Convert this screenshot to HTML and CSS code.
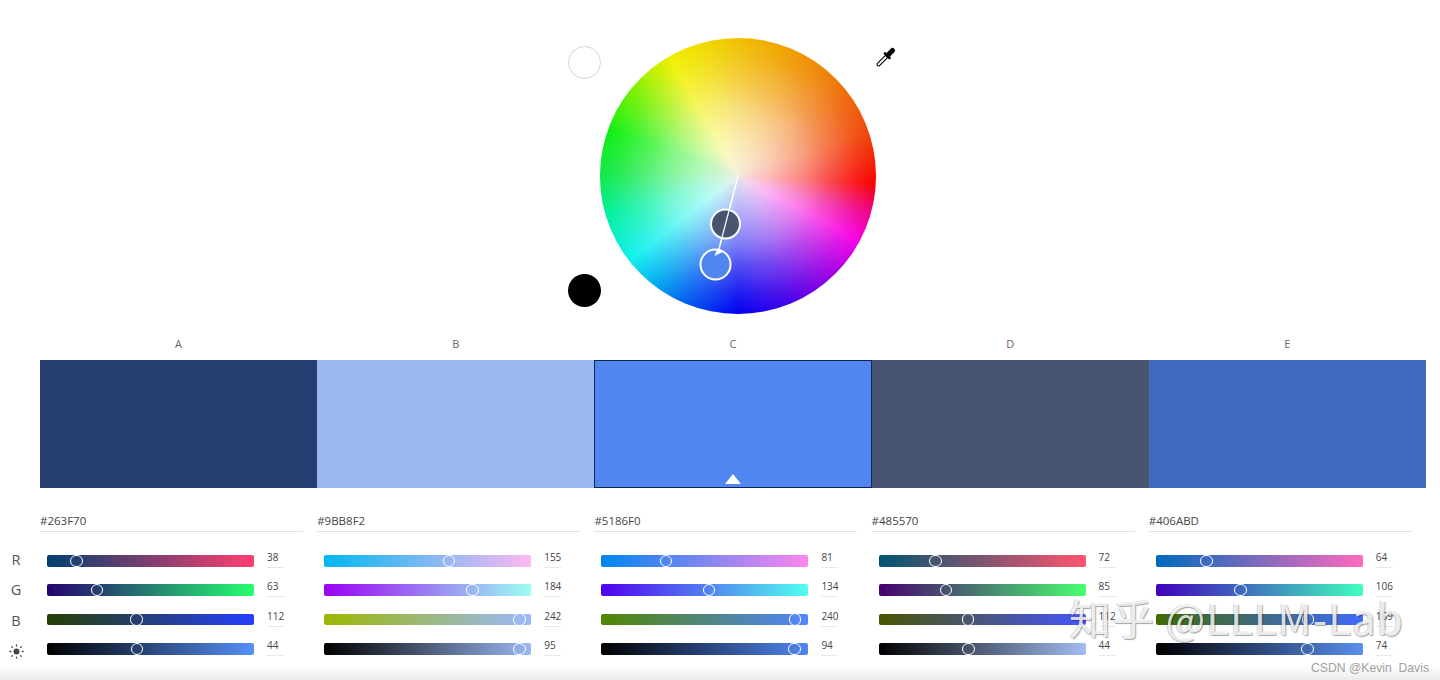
FILE: index.html
```html
<!DOCTYPE html>
<html lang="zh">
<head>
    <meta charset="UTF-8">
    <title>Color Wheel</title>
    <link rel="stylesheet" href="styles.css">
</head>
<body>
    <div class="wheel-stage">
        <div class="base-dot white-dot"></div>
        <div class="base-dot black-dot"></div>
        <div class="wheel"></div>
        <svg class="wheel-marks" viewBox="0 0 276 276" width="276" height="276">
            <line x1="138" y1="138" x2="118" y2="215" stroke="#fff" stroke-width="1.4"/>
            <circle cx="125.5" cy="186" r="14.5" fill="#485570" stroke="#fff" stroke-width="2"/>
            <line x1="131" y1="165" x2="120" y2="207" stroke="#fff" stroke-width="1.2"/>
            <circle cx="115.5" cy="226.5" r="15" fill="#5186F0" stroke="#fff" stroke-width="2"/>
            <polygon points="117,211 122.5,214 114.5,218" fill="#fff"/>
        </svg>
        <svg class="dropper" viewBox="0 0 22 22" width="22" height="22">
            <line x1="3.5" y1="18.5" x2="11" y2="11" stroke="#000" stroke-width="4" stroke-linecap="round"/>
            <line x1="3.5" y1="18.5" x2="11" y2="11" stroke="#fff" stroke-width="1.8" stroke-linecap="round"/>
            <line x1="10" y1="7.5" x2="14.5" y2="12" stroke="#000" stroke-width="2.6" stroke-linecap="round"/>
            <line x1="13" y1="9" x2="17.5" y2="4.5" stroke="#000" stroke-width="5" stroke-linecap="round"/>
        </svg>
    </div>

    <div class="letters">
        <span>A</span><span>B</span><span>C</span><span>D</span><span>E</span>
    </div>

    <div class="swatches">
        <div class="swatch swatch-a"></div>
        <div class="swatch swatch-b"></div>
        <div class="swatch swatch-c active"></div>
        <div class="swatch swatch-d"></div>
        <div class="swatch swatch-e"></div>
    </div>

    <div class="details">
        <div class="row-labels">
            <span>R</span>
            <span>G</span>
            <span>B</span>
            <svg class="sun" viewBox="0 0 16 16" width="15" height="15">
                <circle cx="8" cy="8" r="3.2" fill="#444"/>
                <g stroke="#444" stroke-width="1.4" stroke-linecap="round">
                    <line x1="8" y1="1" x2="8" y2="2"/>
                    <line x1="8" y1="14" x2="8" y2="15"/>
                    <line x1="1" y1="8" x2="2" y2="8"/>
                    <line x1="14" y1="8" x2="15" y2="8"/>
                    <line x1="3" y1="3" x2="3.6" y2="3.6"/>
                    <line x1="12.4" y1="12.4" x2="13" y2="13"/>
                    <line x1="3" y1="13" x2="3.6" y2="12.4"/>
                    <line x1="12.4" y1="3.6" x2="13" y2="3"/>
                </g>
            </svg>
        </div>

        <div class="column">
            <div class="hex">#263F70</div>
            <div class="slider"><div class="track a-r"><i style="left: 14.9%"></i></div><span class="value">38</span></div>
            <div class="slider"><div class="track a-g"><i style="left: 24.7%"></i></div><span class="value">63</span></div>
            <div class="slider"><div class="track a-b"><i style="left: 43.9%"></i></div><span class="value">112</span></div>
            <div class="slider"><div class="track a-v"><i style="left: 44%"></i></div><span class="value">44</span></div>
        </div>

        <div class="column">
            <div class="hex">#9BB8F2</div>
            <div class="slider"><div class="track b-r"><i style="left: 60.8%"></i></div><span class="value">155</span></div>
            <div class="slider"><div class="track b-g"><i style="left: 72.2%"></i></div><span class="value">184</span></div>
            <div class="slider"><div class="track b-b"><i style="left: 94.9%"></i></div><span class="value">242</span></div>
            <div class="slider"><div class="track b-v"><i style="left: 95%"></i></div><span class="value">95</span></div>
        </div>

        <div class="column">
            <div class="hex">#5186F0</div>
            <div class="slider"><div class="track c-r"><i style="left: 31.8%"></i></div><span class="value">81</span></div>
            <div class="slider"><div class="track c-g"><i style="left: 52.5%"></i></div><span class="value">134</span></div>
            <div class="slider"><div class="track c-b"><i style="left: 94.1%"></i></div><span class="value">240</span></div>
            <div class="slider"><div class="track c-v"><i style="left: 94%"></i></div><span class="value">94</span></div>
        </div>

        <div class="column">
            <div class="hex">#485570</div>
            <div class="slider"><div class="track d-r"><i style="left: 28.2%"></i></div><span class="value">72</span></div>
            <div class="slider"><div class="track d-g"><i style="left: 33.3%"></i></div><span class="value">85</span></div>
            <div class="slider"><div class="track d-b"><i style="left: 43.9%"></i></div><span class="value">112</span></div>
            <div class="slider"><div class="track d-v"><i style="left: 44%"></i></div><span class="value">44</span></div>
        </div>

        <div class="column">
            <div class="hex">#406ABD</div>
            <div class="slider"><div class="track e-r"><i style="left: 25.1%"></i></div><span class="value">64</span></div>
            <div class="slider"><div class="track e-g"><i style="left: 41.6%"></i></div><span class="value">106</span></div>
            <div class="slider"><div class="track e-b"><i style="left: 74.1%"></i></div><span class="value">189</span></div>
            <div class="slider"><div class="track e-v"><i style="left: 74%"></i></div><span class="value">74</span></div>
        </div>
    </div>

    <div class="watermark">知乎 @LLLM-Lab</div>
    <div class="credit">CSDN @Kevin&nbsp;&nbsp;Davis</div>
</body>
</html>
```

FILE: styles.css
```css
html, body {
    margin: 0;
    padding: 0;
}

body {
    position: relative;
    width: 1440px;
    height: 680px;
    overflow: hidden;
    background: #fff;
    font-family: "Open Sans", "Noto Sans", sans-serif;
    color: #444;
}

/* screenshot fades out at the bottom edge */
body::after {
    content: '';
    position: absolute;
    left: 0;
    right: 0;
    bottom: 0;
    height: 14px;
    background: linear-gradient(180deg, rgba(232, 232, 232, 0), #ebebeb);
}

/* wheel */
.wheel-stage {
    position: relative;
    width: 276px;
    height: 298px;
    padding-top: 38px;
    margin-left: 600px;
}

.wheel {
    width: 276px;
    height: 276px;
    border-radius: 50%;
    background:
        radial-gradient(circle closest-side,
            rgba(246, 242, 236, 0.94) 0%,
            rgba(255, 255, 255, 0.7) 25%,
            rgba(255, 255, 255, 0.48) 50%,
            rgba(255, 255, 255, 0.3) 65%,
            rgba(255, 255, 255, 0.1) 86%,
            rgba(255, 255, 255, 0) 100%),
        conic-gradient(
            #f0c000 0deg,
            #f09a00 25deg,
            #ee7a08 45deg,
            #f04a08 70deg,
            #f80000 93deg,
            #f0008c 106deg,
            #f800e4 118deg,
            #a000e4 136deg,
            #4400e8 158deg,
            #0000f0 180deg,
            #0060f0 203deg,
            #00a4f0 216deg,
            #10f0f0 232deg,
            #00f0a0 253deg,
            #10e840 272deg,
            #10f010 290deg,
            #80f000 310deg,
            #f0f000 330deg,
            #f0d800 346deg,
            #f0c000 360deg);
}

.wheel-marks {
    position: absolute;
    left: 0;
    top: 38px;
}

.base-dot {
    position: absolute;
    left: -32px;
    width: 33px;
    height: 33px;
    box-sizing: border-box;
    border-radius: 50%;
}

.white-dot {
    top: 46px;
    background: #fff;
    border: 1px solid #d4d4d4;
}

.black-dot {
    top: 274px;
    background: #000;
}

.dropper {
    position: absolute;
    left: 275px;
    top: 46px;
}

/* letters and swatches */
.letters, .swatches {
    display: grid;
    grid-template-columns: repeat(5, 277.2px);
    margin-left: 40px;
}

.letters {
    height: 24px;
    line-height: 16px;
    font-size: 11px;
    color: #666;
    text-align: center;
}

.swatches {
    height: 128px;
}

.swatch {
    position: relative;
    box-sizing: border-box;
}

.swatch-a { background: #263F70; }
.swatch-b { background: #9BB8F2; }
.swatch-c { background: #5186F0; }
.swatch-d { background: #485570; }
.swatch-e { background: #406ABD; }

.active {
    border: 1px solid #10275a;
}

.active::after {
    content: '';
    position: absolute;
    left: 50%;
    bottom: 3px;
    margin-left: -8px;
    border-left: 8px solid transparent;
    border-right: 8px solid transparent;
    border-bottom: 10px solid #fff;
}

/* sliders */
.details {
    display: flex;
    padding-top: 24px;
}

.row-labels {
    display: flex;
    flex-direction: column;
    align-items: center;
    width: 32px;
    margin-right: 8px;
    padding-top: 33px;
    font-size: 14.5px;
    line-height: 30.3px;
    color: #555;
}

.sun {
    margin-top: 8px;
}

.column {
    width: 277.2px;
}

.hex {
    width: 263px;
    height: 19px;
    line-height: 17px;
    margin-bottom: 20px;
    border-bottom: 1px solid #e2e2e2;
    font-size: 11.5px;
}

.slider {
    display: flex;
    align-items: flex-start;
    height: 29.4px;
    padding-left: 7px;
}

.track {
    position: relative;
    width: 207px;
    height: 11.5px;
    margin-top: 3px;
    border-radius: 2px;
}

.track i {
    position: absolute;
    top: -0.5px;
    width: 12.5px;
    height: 12.5px;
    margin-left: -7.5px;
    box-sizing: border-box;
    border: 1px solid #fff;
    border-radius: 50%;
}

.value {
    width: 17px;
    height: 15px;
    margin-left: 13px;
    border-bottom: 1px solid #e8e8e8;
    font-size: 10px;
    line-height: 11px;
    white-space: nowrap;
}

.a-r { background: linear-gradient(90deg, rgb(0, 63, 112), rgb(255, 63, 112)); }
.a-g { background: linear-gradient(90deg, rgb(38, 0, 112), rgb(38, 255, 112)); }
.a-b { background: linear-gradient(90deg, rgb(38, 63, 0), rgb(38, 63, 255)); }
.a-v { background: linear-gradient(90deg, #000, #5690f8); }

.b-r { background: linear-gradient(90deg, rgb(0, 184, 242), rgb(255, 184, 242)); }
.b-g { background: linear-gradient(90deg, rgb(155, 0, 242), rgb(155, 255, 242)); }
.b-b { background: linear-gradient(90deg, rgb(155, 184, 0), rgb(155, 184, 255)); }
.b-v { background: linear-gradient(90deg, #000, #9BB8F2); }

.c-r { background: linear-gradient(90deg, rgb(0, 134, 240), rgb(255, 134, 240)); }
.c-g { background: linear-gradient(90deg, rgb(81, 0, 240), rgb(81, 255, 240)); }
.c-b { background: linear-gradient(90deg, rgb(81, 134, 0), rgb(81, 134, 255)); }
.c-v { background: linear-gradient(90deg, #000, #5186F0); }

.d-r { background: linear-gradient(90deg, rgb(0, 85, 112), rgb(255, 85, 112)); }
.d-g { background: linear-gradient(90deg, rgb(72, 0, 112), rgb(72, 255, 112)); }
.d-b { background: linear-gradient(90deg, rgb(72, 85, 0), rgb(72, 85, 255)); }
.d-v { background: linear-gradient(90deg, #000, #a3bdf2); }

.e-r { background: linear-gradient(90deg, rgb(0, 106, 189), rgb(255, 106, 189)); }
.e-g { background: linear-gradient(90deg, rgb(64, 0, 189), rgb(64, 255, 189)); }
.e-b { background: linear-gradient(90deg, rgb(64, 106, 0), rgb(64, 106, 255)); }
.e-v { background: linear-gradient(90deg, #000, #5a8ff0); }

/* marks burned into the screenshot */
.watermark {
    position: absolute;
    left: 1069px;
    top: 589px;
    font-family: "Noto Sans CJK SC", "Liberation Sans", sans-serif;
    font-size: 42px;
    line-height: 56px;
    letter-spacing: 1px;
    white-space: nowrap;
    color: rgba(255, 255, 255, 0.82);
    text-shadow: 1px 1px 1px rgba(0, 0, 0, 0.35), -1px 0 1px rgba(0, 0, 0, 0.18);
}

.credit {
    position: absolute;
    z-index: 1;
    right: 11px;
    top: 661px;
    font-family: "Liberation Sans", sans-serif;
    font-size: 12.2px;
    line-height: 15px;
    color: #a0a0a0;
}
```
